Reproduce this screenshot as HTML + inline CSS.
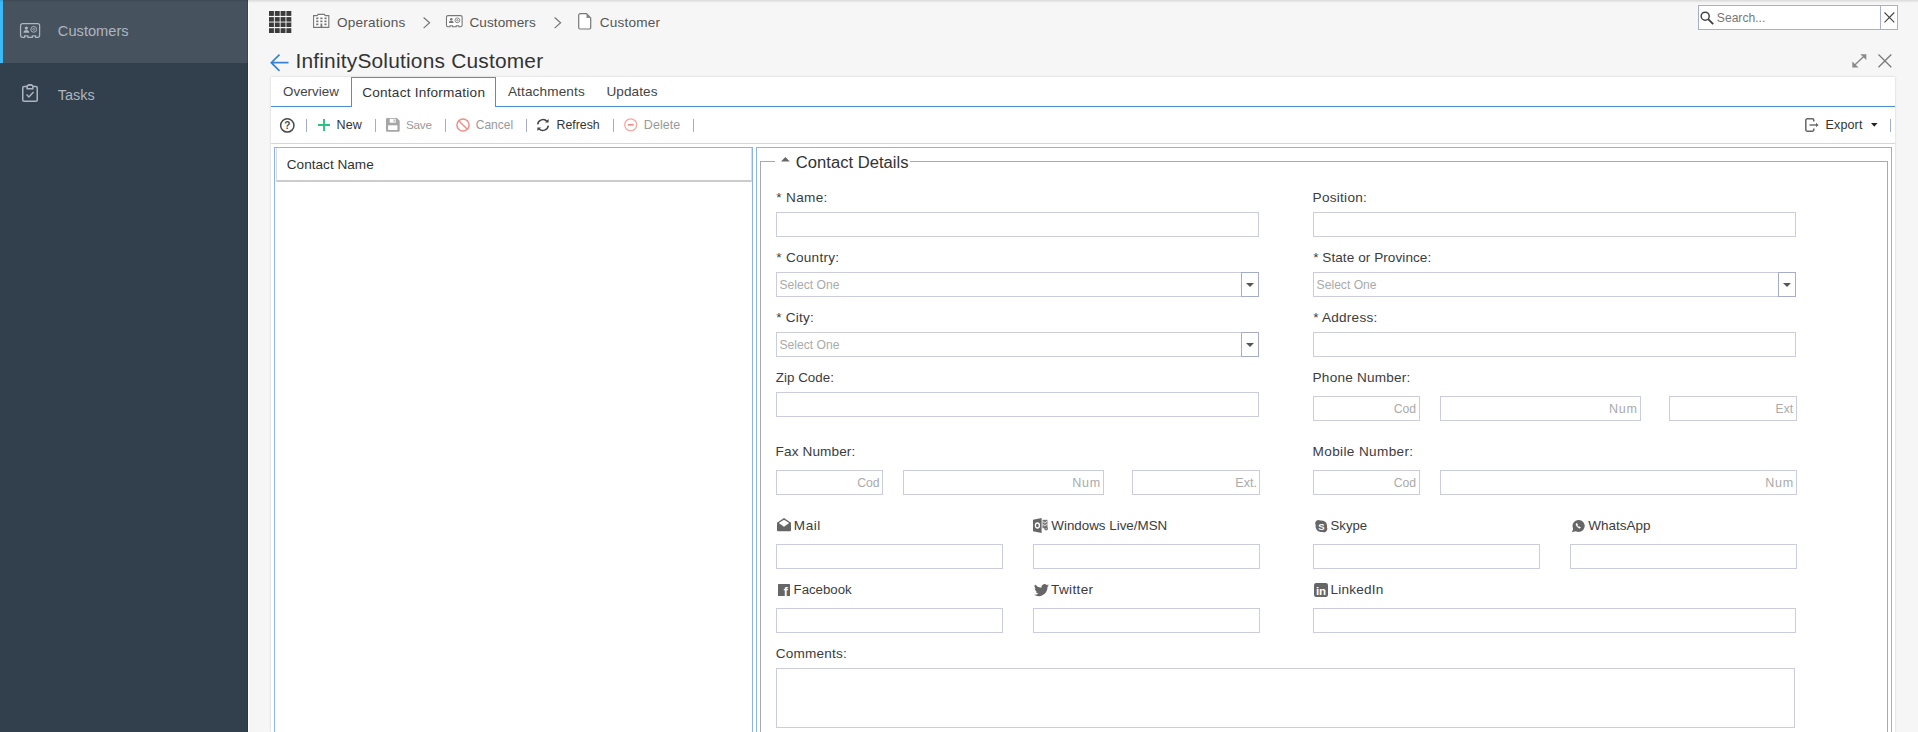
<!DOCTYPE html>
<html lang="en"><head><meta charset="utf-8"><title>InfinitySolutions Customer</title>
<style>
html,body{margin:0;padding:0}
body{width:1918px;height:732px;overflow:hidden;position:relative;background:#f6f6f6;font-family:"Liberation Sans",sans-serif;}
.a{position:absolute;box-sizing:border-box}
.t{position:absolute;white-space:nowrap;font-family:"Liberation Sans",sans-serif}
.inp{position:absolute;box-sizing:border-box;background:#fff;border:1px solid #cbcddf;height:25px}
.dd{position:absolute;box-sizing:border-box;background:#fff;border:1px solid #a7acc8;width:18px;height:25px}
.dd:after{content:"";position:absolute;left:4px;top:10px;border-left:4px solid transparent;border-right:4px solid transparent;border-top:4px solid #555}
.sep{position:absolute;width:1px;height:13px;top:119px;background:#a6abc9}
svg{position:absolute;overflow:visible}

</style></head>
<body>
<!-- sidebar -->
<div class="a" style="left:0;top:0;width:248px;height:732px;background:#323f4d"></div>
<div class="a" style="left:0;top:0;width:248px;height:63px;background:#47525f;border-left:3px solid #3bb8f5"></div>
<div class="a" style="left:247px;top:0;width:1px;height:732px;background:rgba(8,20,40,.22)"></div>
<div class="a" style="left:248px;top:0;width:1px;height:732px;background:#fff"></div>
<div class="a" style="left:0;top:0;width:248px;height:2px;background:linear-gradient(rgba(0,0,0,.13),rgba(0,0,0,0))"></div>
<!-- top shadow -->
<div class="a" style="left:248px;top:0;width:1670px;height:3px;background:linear-gradient(#dadada,#f6f6f6)"></div>
<!-- white panel -->
<div class="a" style="left:271px;top:77px;width:1624px;height:655px;background:#fff;box-shadow:0 0 2px rgba(0,0,0,.18)"></div>
<!-- tabs -->
<div class="a" style="left:271px;top:106px;width:1624px;height:1px;background:#4a90d9"></div>
<div class="a" style="left:351px;top:77px;width:145px;height:30px;background:#fff;border:1px solid #4a90d9;border-bottom:none"></div>
<!-- toolbar bottom border -->
<div class="a" style="left:271px;top:143px;width:1624px;height:1px;background:#d6d6d6"></div>
<div class="sep" style="left:306px"></div>
<div class="sep" style="left:375px"></div>
<div class="sep" style="left:445px"></div>
<div class="sep" style="left:526px"></div>
<div class="sep" style="left:613px"></div>
<div class="sep" style="left:693px"></div>
<div class="sep" style="left:1890px"></div>
<!-- grid panel -->
<div class="a" style="left:274px;top:147px;width:479px;height:600px;border:1px solid #8db3ea;background:#fff"></div>
<div class="a" style="left:276px;top:148px;width:476px;height:34px;border-left:1px solid #ddd;border-right:1px solid #ddd;border-bottom:2px solid #ccc;background:#fff"></div>
<!-- detail panel -->
<div class="a" style="left:756px;top:147px;width:1136px;height:600px;border:1px solid #8db3ea;background:#fff"></div>
<div class="a" style="left:760px;top:161px;width:1128px;height:600px;border:1px solid #a8a8b0"></div>
<div class="a" style="left:775px;top:160px;width:135px;height:3px;background:#fff"></div>
<!-- inputs -->
<div class="inp" style="left:776px;top:212px;width:483px"></div>
<div class="inp" style="left:1313px;top:212px;width:483px"></div>
<div class="inp" style="left:776px;top:272px;width:483px"></div><div class="dd" style="left:1241px;top:272px"></div>
<div class="inp" style="left:1313px;top:272px;width:483px"></div><div class="dd" style="left:1778px;top:272px"></div>
<div class="inp" style="left:776px;top:332px;width:483px"></div><div class="dd" style="left:1241px;top:332px"></div>
<div class="inp" style="left:1313px;top:332px;width:483px"></div>
<div class="inp" style="left:776px;top:392px;width:483px"></div>
<div class="inp" style="left:1313px;top:396px;width:107px"></div>
<div class="inp" style="left:1440px;top:396px;width:201px"></div>
<div class="inp" style="left:1669px;top:396px;width:128px"></div>
<div class="inp" style="left:776px;top:470px;width:107px"></div>
<div class="inp" style="left:903px;top:470px;width:201px"></div>
<div class="inp" style="left:1132px;top:470px;width:128px"></div>
<div class="inp" style="left:1313px;top:470px;width:107px"></div>
<div class="inp" style="left:1440px;top:470px;width:357px"></div>
<div class="inp" style="left:776px;top:544px;width:227px"></div>
<div class="inp" style="left:1033px;top:544px;width:227px"></div>
<div class="inp" style="left:1313px;top:544px;width:227px"></div>
<div class="inp" style="left:1570px;top:544px;width:227px"></div>
<div class="inp" style="left:776px;top:608px;width:227px"></div>
<div class="inp" style="left:1033px;top:608px;width:227px"></div>
<div class="inp" style="left:1313px;top:608px;width:483px"></div>
<div class="inp" style="left:776px;top:668px;width:1019px;height:60px"></div>
<!-- search -->
<div class="a" style="left:1698px;top:5px;width:200px;height:25px;background:#fff;border:1px solid #a9aecb"></div>
<div class="a" style="left:1880px;top:5px;width:1px;height:25px;background:#a9aecb"></div>
<!-- sidebar icons -->
<svg style="left:20px;top:23px" width="20.2" height="15.2" viewBox="0 0 21 15.800" fill="none" stroke="#adb6bf" stroke-width="1.3">
 <path d="M2.6.65h15.8a2 2 0 0 1 2 2v10.2a2 2 0 0 1-2 2h-2.2v-1.4h-3.4v1.4H8.2v-1.4H4.8v1.4H2.6a2 2 0 0 1-2-2V2.65a2 2 0 0 1 2-2z"/>
 <g fill="#adb6bf" stroke="none"><circle cx="6.6" cy="5.3" r="1.7"/><path d="M3.6 10.2c0-2 1.3-3 3-3s3 1 3 3z"/></g>
 <circle cx="14.3" cy="6.6" r="3" stroke-width="1"/><circle cx="14.3" cy="6.6" r="1" stroke-width=".8"/>
</svg>
<svg style="left:22px;top:84.3px" width="16" height="18.800" viewBox="0 0 17 20" fill="none" stroke="#adb6bf" stroke-width="1.600">
 <path d="M5.5 2.7H2.2a1.4 1.4 0 0 0-1.4 1.4v12.8a1.4 1.4 0 0 0 1.4 1.4h12.6a1.4 1.4 0 0 0 1.4-1.4V4.1a1.4 1.4 0 0 0-1.4-1.4h-3.3"/>
 <path d="M5.5 5V2.2a.8.8 0 0 1 .8-.8h1.2V.7h2v.7h1.200a.8.8 0 0 1 .8.8V5z"/>
 <path d="M4.800 11.3l2.500 2.500 5-5.300" stroke-width="1.5"/>
</svg>
<!-- app grid -->
<svg style="left:269px;top:11px" width="23" height="22" viewBox="0 0 23 22">
 <g fill="#3b3b3b"><rect x="0" y="0" width="4.900" height="4.900"/><rect x="0" y="6.100" width="4.900" height="9.900"/><rect x="0" y="17.200" width="4.900" height="4.800"/><rect x="5.8" y="0" width="4.900" height="4.900"/><rect x="5.8" y="6.100" width="4.900" height="9.900"/><rect x="5.8" y="17.200" width="4.900" height="4.800"/><rect x="11.6" y="0" width="4.900" height="4.900"/><rect x="11.6" y="6.100" width="4.900" height="9.900"/><rect x="11.6" y="17.200" width="4.900" height="4.800"/><rect x="17.4" y="0" width="4.900" height="4.900"/><rect x="17.4" y="6.100" width="4.900" height="9.900"/><rect x="17.4" y="17.200" width="4.900" height="4.800"/></g><rect y="10.200" width="22.300" height="1.800" fill="#fff" fill-opacity=".48"/>
</svg>
<!-- breadcrumb icons -->
<svg style="left:313px;top:13px" width="17" height="16" viewBox="0 0 17 16" fill="none" stroke="#777" stroke-width="1.1">
 <path d="M.6 2.6h3.600l.8-1.200h6.400l.8 1.200h3.600v11.800H.6z" fill="#fff"/>
 <g fill="#777" stroke="none"><rect x="3.200" y="4.500" width="2.200" height="1.700"/><rect x="7.300" y="4.500" width="2.200" height="1.700"/><rect x="11.400" y="4.500" width="2.200" height="1.700"/>
 <rect x="3.200" y="7.500" width="2.200" height="1.700"/><rect x="7.300" y="7.500" width="2.200" height="1.700"/><rect x="11.400" y="7.500" width="2.200" height="1.700"/>
 <rect x="3.200" y="10.500" width="2.200" height="1.700"/><rect x="7.500" y="10.500" width="1.800" height="3.800"/><rect x="11.400" y="10.500" width="2.200" height="1.700"/></g>
</svg>
<svg style="left:423px;top:17px" width="8" height="12" viewBox="0 0 8 12" fill="none" stroke="#777" stroke-width="1.2"><path d="M.6.500l6 5.300-6 5.300"/></svg>
<svg style="left:446px;top:15px" width="17" height="13" viewBox="0 0 17 13" fill="none" stroke="#777" stroke-width="1.1">
 <path d="M2 .6h12.600a1.500 1.500 0 0 1 1.500 1.500v8.200a1.500 1.500 0 0 1-1.500 1.500h-1.800v-1.100h-2.600v1.100H6.600v-1.100H4v1.100H2A1.500 1.500 0 0 1 .5 10.300V2.100A1.500 1.500 0 0 1 2 .6z" fill="#fff"/>
 <g fill="#777" stroke="none"><circle cx="5.300" cy="4.200" r="1.300"/><path d="M2.900 8.100c0-1.600 1-2.400 2.400-2.400s2.400.8 2.400 2.400z"/></g>
 <circle cx="11.400" cy="5.300" r="2.400" stroke-width=".9"/><circle cx="11.400" cy="5.300" r=".8" stroke-width=".7"/>
</svg>
<svg style="left:554px;top:17px" width="8" height="12" viewBox="0 0 8 12" fill="none" stroke="#777" stroke-width="1.2"><path d="M.6.500l6 5.300-6 5.300"/></svg>
<svg style="left:578px;top:13px" width="14" height="17" viewBox="0 0 14 17" fill="none" stroke="#777" stroke-width="1.2">
 <path d="M2.200.7h6.300l4.200 4.200v9.600a1.500 1.500 0 0 1-1.500 1.500H2.200a1.500 1.500 0 0 1-1.500-1.500V2.200A1.500 1.500 0 0 1 2.200.7z" fill="#fff"/>
 <path d="M8.500.7v4.200h4.200z" fill="#888" stroke="none"/>
</svg>
<!-- search icon and clear -->
<svg style="left:1700px;top:11px" width="14" height="14" viewBox="0 0 14 14" fill="none" stroke="#444" stroke-width="1.500">
 <circle cx="5.200" cy="5.200" r="4"/><path d="M8.200 8.200l5 5" stroke-width="1.900"/>
</svg>
<svg style="left:1884px;top:12px" width="11" height="11" viewBox="0 0 11 11" fill="none" stroke="#444" stroke-width="1.100"><path d="M.5.500l9.800 9.800M10.300.5L.5 10.300"/></svg>
<!-- back arrow -->
<svg style="left:270px;top:54px" width="19" height="18" viewBox="0 0 19 18" fill="none" stroke="#3a83d2" stroke-width="1.700"><path d="M18.500 8.700H1.500M9.500.6L1.300 8.700l8.200 8.100"/></svg>
<!-- expand + close -->
<svg style="left:1852px;top:54px" width="15" height="14" viewBox="0 0 15 14" fill="#8a8a8a" stroke="#8a8a8a" stroke-width="1.400">
 <path d="M2.500 11.300L12 2.200" fill="none"/><path d="M8.300.3h6v5.600z" stroke="none"/><path d="M.3 7.600v5.800h6.200z" stroke="none"/>
</svg>
<svg style="left:1878px;top:54px" width="14" height="14" viewBox="0 0 14 14" fill="none" stroke="#7a7a7a" stroke-width="1.300"><path d="M.5.500l12.800 12.800M13.300.5L.5 13.300"/></svg>
<!-- toolbar icons -->
<svg style="left:280px;top:117.500px" width="15" height="15" viewBox="0 0 15 15" fill="none" stroke="#4a4a4a" stroke-width="1.500">
 <circle cx="7.300" cy="7.400" r="6.650"/>
 <text x="7.300" y="10.900" font-size="10" font-weight="bold" text-anchor="middle" fill="#4a4a4a" stroke="none" font-family="Liberation Sans, sans-serif">?</text>
</svg>
<svg style="left:318px;top:119px" width="12" height="12" viewBox="0 0 12 12" fill="none" stroke="#2dc181" stroke-width="1.900"><path d="M6 0v12M0 6h12"/></svg>
<svg style="left:386px;top:118px" width="14" height="14" viewBox="0 0 14 14">
 <path d="M1.300 0h9.700L13.700 2.700v9.800a1.300 1.300 0 0 1-1.300 1.300H1.300A1.300 1.300 0 0 1 0 12.500V1.300A1.300 1.300 0 0 1 1.300 0z" fill="#a6a6a6"/>
 <rect x="3.700" y=".8" width="6" height="3.900" fill="#fff"/><rect x="7.600" y="1.500" width="1.100" height="2.300" fill="#a6a6a6"/>
 <rect x="2.100" y="7.300" width="9.300" height="4.700" fill="#fff"/>
</svg>
<svg style="left:456px;top:118px" width="14" height="14" viewBox="0 0 14 14" fill="none" stroke="#ee8f88" stroke-width="1.500"><circle cx="7" cy="7" r="6.100"/><path d="M2.700 2.700l8.600 8.600"/></svg>
<svg style="left:536px;top:118px" width="14" height="14" viewBox="0 0 14 14" fill="none" stroke="#444" stroke-width="1.500">
 <path d="M1.700 6.300A5.400 5.400 0 0 1 11 3.300"/><path d="M12.300 7.700A5.400 5.400 0 0 1 3 10.700"/>
 <path d="M12.600.9v3.600H9z" fill="#444" stroke="none"/><path d="M1.400 13.100V9.500H5z" fill="#444" stroke="none"/>
</svg>
<svg style="left:624px;top:118px" width="14" height="14" viewBox="0 0 14 14" fill="none" stroke="#f3a7a2" stroke-width="1.300"><circle cx="6.700" cy="6.800" r="6"/><path d="M3.700 6.800h6" stroke="#ee8f88" stroke-width="1.700"/></svg>
<svg style="left:1805px;top:118px" width="15" height="15" viewBox="0 0 15 15" fill="none" stroke="#666" stroke-width="1.500">
 <path d="M8.800 3.400V2.300A1.500 1.500 0 0 0 7.300.8H2.300A1.500 1.500 0 0 0 .8 2.300v9.400a1.500 1.500 0 0 0 1.500 1.500h5a1.500 1.500 0 0 0 1.500-1.500v-1.100"/>
 <path d="M4.500 7h7.500" stroke-width="1.400"/><path d="M11 4.800L13.600 7 11 9.200z" fill="#666" stroke="none"/>
</svg>
<svg style="left:1871px;top:123px" width="7" height="4" viewBox="0 0 7 4"><path d="M0 0h6.600L3.300 3.800z" fill="#222"/></svg>
<!-- legend caret -->
<svg style="left:781px;top:157px" width="9" height="5" viewBox="0 0 9 5"><path d="M0 4.500L4.400 0l4.400 4.500z" fill="#666"/></svg>
<!-- social icons -->
<svg style="left:777px;top:518px" width="14" height="14" viewBox="0 0 14 14"><path d="M0 4.700L7 0l7 4.700v7.500a1 1 0 0 1-1 1H1a1 1 0 0 1-1-1z" fill="#666"/><path d="M1.800 5L7 1.700 12.200 5 7 8.800z" fill="#fff"/></svg>
<svg style="left:1033px;top:518px" width="16" height="15" viewBox="0 0 16 15">
 <path d="M0 1.800L8.600 0v15L0 13.200z" fill="#666"/><ellipse cx="4.400" cy="7.500" rx="2" ry="2.500" fill="none" stroke="#fff" stroke-width="1.300"/>
 <rect x="9.500" y="1.800" width="5" height="8.400" fill="#777"/><path d="M9.600 3.300l2.300 1.700 2.500-2M9.600 6.300l2.300 1.400 2.500-1.600" stroke="#fff" stroke-width=".8" fill="none"/>
 <circle cx="13.100" cy="10.800" r="1.800" fill="#666"/><circle cx="13.100" cy="10.800" r=".6" fill="#fff"/>
</svg>
<svg style="left:1315px;top:520px" width="13" height="13" viewBox="0 0 13 13">
 <path d="M3.400 0a3.400 3.400 0 0 1 1.800.5 5.800 5.800 0 0 1 6.800 6.800A3.400 3.400 0 0 1 7.500 12a5.800 5.800 0 0 1-6.800-6.800A3.400 3.400 0 0 1 3.400 0z" fill="#666"/>
 <text x="6.400" y="9.800" font-size="9.500" font-weight="bold" text-anchor="middle" fill="#fff" font-family="Liberation Sans, sans-serif">S</text>
</svg>
<svg style="left:1572px;top:520px" width="13" height="13" viewBox="0 0 13 13">
 <path d="M6.700 0a6 6 0 1 1-3 11.200L0 12.300l1.200-3.500A6 6 0 0 1 6.700 0z" fill="#666"/>
 <path d="M4.300 3.500c-.5.500-.4 1.500.7 2.900s2.300 2 3 1.700l.5-.6-1.100-.8-.5.300c-.4-.1-1.300-1-1.500-1.600l.4-.5-.7-1.300z" fill="#fff" stroke="#fff" stroke-width=".5"/>
</svg>
<svg style="left:778px;top:584px;overflow:hidden" width="12" height="12" viewBox="0 0 12 12"><rect width="12" height="12" rx=".6" fill="#666"/><text x="7.800" y="12" font-size="12" font-weight="bold" text-anchor="middle" fill="#fff" font-family="Liberation Sans, sans-serif">f</text></svg>
<svg style="left:1034px;top:584px" width="15" height="12.500" viewBox="0 0 24 20"><path d="M24 2.400c-.9.400-1.800.7-2.800.8 1-.6 1.800-1.600 2.200-2.700-1 .6-2 1-3.100 1.200A4.900 4.900 0 0 0 11.900 6 14 14 0 0 1 1.700.9a4.900 4.900 0 0 0 1.500 6.600c-.8 0-1.600-.2-2.200-.6 0 2.400 1.700 4.400 3.900 4.900-.7.200-1.500.2-2.200.1a4.900 4.900 0 0 0 4.600 3.400A9.900 9.900 0 0 1 0 17.300 14 14 0 0 0 7.500 19.500c9.100 0 14.300-7.700 14-14.600 1-.7 1.800-1.600 2.500-2.500z" fill="#666"/></svg>
<svg style="left:1314px;top:583px" width="14" height="14" viewBox="0 0 14 14"><rect width="14" height="14" rx="2.200" fill="#666"/><text x="7" y="11.600" font-size="11.500" font-weight="bold" text-anchor="middle" fill="#fff" letter-spacing="-.2" font-family="Liberation Sans, sans-serif">in</text></svg>

<!-- text -->
<span class="t" style="left:57.85px;top:24px;font-size:14.63px;line-height:14.63px;color:#adb6bf;letter-spacing:0.012px">Customers</span>
<span class="t" style="left:57.75px;top:88px;font-size:14.48px;line-height:14.48px;color:#adb6bf;letter-spacing:-0.012px">Tasks</span>
<span class="t" style="left:336.90px;top:16px;font-size:13.58px;line-height:13.58px;color:#555;letter-spacing:0.211px">Operations</span>
<span class="t" style="left:469.45px;top:16px;font-size:13.58px;line-height:13.58px;color:#555;letter-spacing:0.075px">Customers</span>
<span class="t" style="left:599.85px;top:16px;font-size:13.58px;line-height:13.58px;color:#555;letter-spacing:0.186px">Customer</span>
<span class="t" style="left:295.40px;top:51px;font-size:20.9px;line-height:20.9px;color:#333;letter-spacing:0.202px">InfinitySolutions Customer</span>
<span class="t" style="left:283.10px;top:85px;font-size:13.37px;line-height:13.37px;color:#444;letter-spacing:0.007px">Overview</span>
<span class="t" style="left:362.25px;top:86px;font-size:13.58px;line-height:13.58px;color:#333;letter-spacing:0.233px">Contact Information</span>
<span class="t" style="left:507.90px;top:85px;font-size:13.58px;line-height:13.58px;color:#444;letter-spacing:0.14px">Attachments</span>
<span class="t" style="left:606.50px;top:85px;font-size:13.58px;line-height:13.58px;color:#444;letter-spacing:0.058px">Updates</span>
<span class="t" style="left:336.60px;top:119px;font-size:12.54px;line-height:12.54px;color:#333;letter-spacing:0.1px">New</span>
<span class="t" style="left:405.90px;top:119px;font-size:11.76px;line-height:11.76px;color:#999;letter-spacing:-0.217px">Save</span>
<span class="t" style="left:475.80px;top:119px;font-size:12.03px;line-height:12.03px;color:#999;letter-spacing:-0.03px">Cancel</span>
<span class="t" style="left:556.60px;top:119px;font-size:12.34px;line-height:12.34px;color:#333;letter-spacing:-0.017px">Refresh</span>
<span class="t" style="left:643.80px;top:119px;font-size:12.54px;line-height:12.54px;color:#999;letter-spacing:0.03px">Delete</span>
<span class="t" style="left:1825.60px;top:119px;font-size:12.54px;line-height:12.54px;color:#333;letter-spacing:0.11px">Export</span>
<span class="t" style="left:1716.80px;top:12px;font-size:12.13px;line-height:12.13px;color:#777">Search...</span>
<span class="t" style="left:286.75px;top:158px;font-size:13.58px;line-height:13.58px;color:#333;letter-spacing:0.018px">Contact Name</span>
<span class="t" style="left:795.75px;top:155px;font-size:16.62px;line-height:16.62px;color:#333;letter-spacing:0.011px">Contact Details</span>
<span class="t" style="left:776.35px;top:191px;font-size:13.58px;line-height:13.58px;color:#3c3c3c;letter-spacing:0.317px">* Name:</span>
<span class="t" style="left:1312.60px;top:191px;font-size:13.58px;line-height:13.58px;color:#3c3c3c;letter-spacing:0.269px">Position:</span>
<span class="t" style="left:776.35px;top:251px;font-size:13.58px;line-height:13.58px;color:#3c3c3c;letter-spacing:0.256px">* Country:</span>
<span class="t" style="left:1313.15px;top:251px;font-size:13.58px;line-height:13.58px;color:#3c3c3c;letter-spacing:0.058px">* State or Province:</span>
<span class="t" style="left:776.35px;top:311px;font-size:13.58px;line-height:13.58px;color:#3c3c3c;letter-spacing:0.192px">* City:</span>
<span class="t" style="left:1313.15px;top:311px;font-size:13.58px;line-height:13.58px;color:#3c3c3c;letter-spacing:0.244px">* Address:</span>
<span class="t" style="left:775.80px;top:371px;font-size:13.39px;line-height:13.39px;color:#3c3c3c;letter-spacing:0.019px">Zip Code:</span>
<span class="t" style="left:1312.60px;top:371px;font-size:13.58px;line-height:13.58px;color:#3c3c3c;letter-spacing:0.221px">Phone Number:</span>
<span class="t" style="left:775.60px;top:445px;font-size:13.58px;line-height:13.58px;color:#3c3c3c;letter-spacing:0.115px">Fax Number:</span>
<span class="t" style="left:1312.60px;top:445px;font-size:13.58px;line-height:13.58px;color:#3c3c3c;letter-spacing:0.362px">Mobile Number:</span>
<span class="t" style="left:793.80px;top:519px;font-size:13.58px;line-height:13.58px;color:#3c3c3c;letter-spacing:0.533px">Mail</span>
<span class="t" style="left:1051.30px;top:519px;font-size:13.38px;line-height:13.38px;color:#3c3c3c">Windows Live/MSN</span>
<span class="t" style="left:1330.55px;top:519px;font-size:13.17px;line-height:13.17px;color:#3c3c3c;letter-spacing:-0.012px">Skype</span>
<span class="t" style="left:1588.20px;top:519px;font-size:13.5px;line-height:13.5px;color:#3c3c3c;letter-spacing:0.007px">WhatsApp</span>
<span class="t" style="left:793.60px;top:583px;font-size:13.26px;line-height:13.26px;color:#3c3c3c;letter-spacing:-0.021px">Facebook</span>
<span class="t" style="left:1051.05px;top:583px;font-size:13.58px;line-height:13.58px;color:#3c3c3c;letter-spacing:0.35px">Twitter</span>
<span class="t" style="left:1330.50px;top:583px;font-size:13.58px;line-height:13.58px;color:#3c3c3c;letter-spacing:0.214px">LinkedIn</span>
<span class="t" style="left:775.85px;top:647px;font-size:13.58px;line-height:13.58px;color:#3c3c3c;letter-spacing:0.175px">Comments:</span>
<span class="t" style="left:779.50px;top:279px;font-size:12.12px;line-height:12.12px;color:#aaa;letter-spacing:0.011px">Select One</span>
<span class="t" style="left:1316.60px;top:279px;font-size:12.12px;line-height:12.12px;color:#aaa;letter-spacing:0.011px">Select One</span>
<span class="t" style="left:779.50px;top:339px;font-size:12.12px;line-height:12.12px;color:#aaa;letter-spacing:0.011px">Select One</span>
<span class="t" style="left:1393.70px;top:403px;font-size:12.2px;line-height:12.2px;color:#aaa;letter-spacing:0.05px">Cod</span>
<span class="t" style="left:1608.90px;top:403px;font-size:12.54px;line-height:12.54px;color:#aaa;letter-spacing:0.825px">Num</span>
<span class="t" style="left:1775.60px;top:403px;font-size:12.04px;line-height:12.04px;color:#aaa;letter-spacing:0.025px">Ext</span>
<span class="t" style="left:857.20px;top:477px;font-size:12.2px;line-height:12.2px;color:#aaa;letter-spacing:0.05px">Cod</span>
<span class="t" style="left:1072.20px;top:477px;font-size:12.54px;line-height:12.54px;color:#aaa;letter-spacing:0.825px">Num</span>
<span class="t" style="left:1235.30px;top:477px;font-size:12.54px;line-height:12.54px;color:#aaa">Ext.</span>
<span class="t" style="left:1393.70px;top:477px;font-size:12.2px;line-height:12.2px;color:#aaa;letter-spacing:0.05px">Cod</span>
<span class="t" style="left:1765.20px;top:477px;font-size:12.54px;line-height:12.54px;color:#aaa;letter-spacing:0.825px">Num</span>
</body></html>
